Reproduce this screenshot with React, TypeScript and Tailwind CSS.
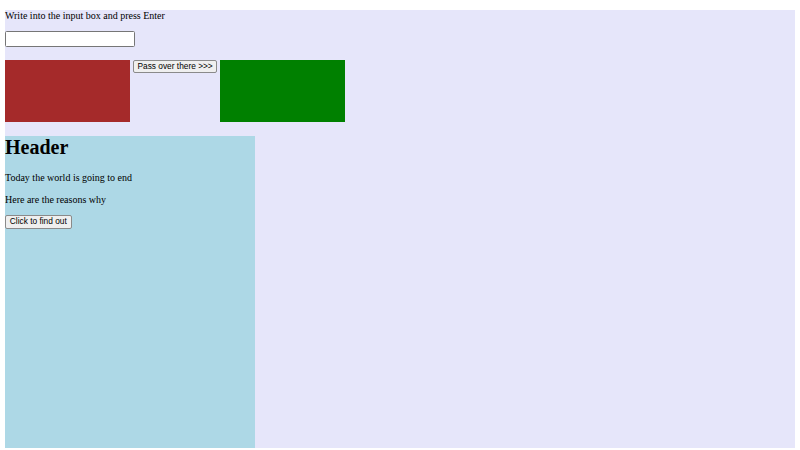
import React from "react";

export default function App() {
  return (
    <div className="w-[800px] h-[450px] bg-white px-[5px] pt-[10px] overflow-hidden" style={{ fontFamily: '"Liberation Serif", "Times New Roman", serif' }}>
      <div className="bg-[#e6e6fa] text-black">
        <p className="text-[10px] leading-[11.5px]">Write into the input box and press Enter</p>
        <input
          type="text"
          className="mt-[9.2px] block w-[130px] h-[16px] bg-white border border-[#767676] rounded-[1.5px] outline-none"
        />
        <div className="mt-[13px] flex items-start">
          <div className="w-[125px] h-[62.5px] bg-[#a52a2a]" />
          <button
            className="ml-[3px] px-[3.5px] py-[1px] text-[8.33px] leading-[9.6px] bg-[#efefef] border border-[#8a8a8a] rounded-[2px] text-black whitespace-nowrap"
            style={{ fontFamily: '"Liberation Sans", Arial, sans-serif' }}
          >
            Pass over there &gt;&gt;&gt;
          </button>
          <div className="ml-[3px] w-[125px] h-[62.5px] bg-[#008000]" />
        </div>
        <div className="mt-[13.5px] w-[250px] h-[312.5px] bg-[#add8e6]">
          <h1 className="text-[20px] leading-[23px] font-bold">Header</h1>
          <p className="mt-[13.4px] text-[10px] leading-[11.5px]">Today the world is going to end</p>
          <p className="mt-[10px] text-[10px] leading-[11.5px]">Here are the reasons why</p>
          <button
            className="mt-[10px] block px-[3.8px] py-[1px] text-[8.33px] leading-[9.6px] bg-[#efefef] border border-[#8a8a8a] rounded-[2px] text-black whitespace-nowrap"
            style={{ fontFamily: '"Liberation Sans", Arial, sans-serif' }}
          >
            Click to find out
          </button>
        </div>
      </div>
    </div>
  );
}
